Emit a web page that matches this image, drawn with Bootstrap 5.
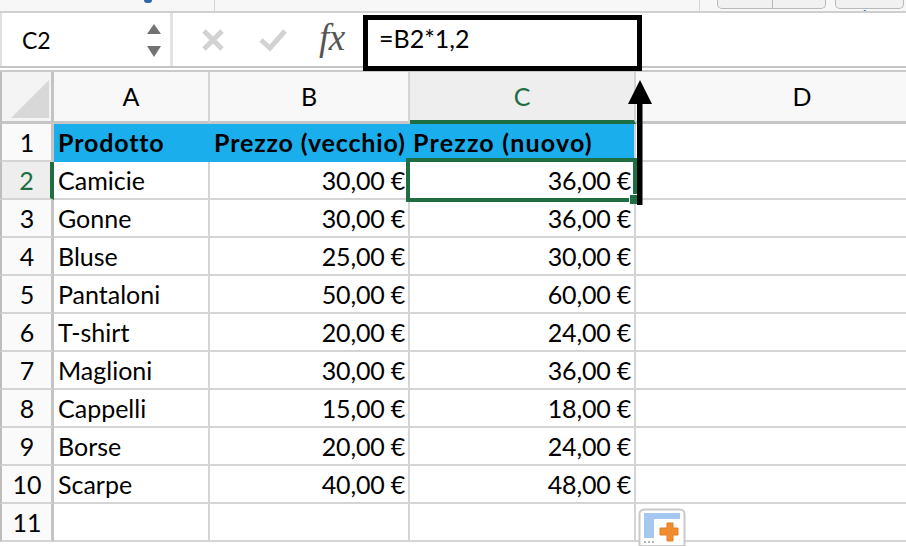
<!DOCTYPE html>
<html lang="it">
<head>
<meta charset="utf-8">
<title>Foglio</title>
<link href="https://cdn.jsdelivr.net/npm/bootstrap@5.3.0/dist/css/bootstrap.min.css" rel="stylesheet">
<style>
html,body{height:546px;overflow:hidden;background:#fff}
body{font-family:Lato,"Liberation Sans",sans-serif;color:#000;position:relative}
.ribbon-strip{height:13px;background:#f7f7f7;border-bottom:2px solid #cfcfcf;overflow:hidden}
.ribbon-sep{width:1px;height:11px;background:#d4d4d4}
.ribbon-dot{width:8px;height:3px;margin-left:144px;background:#2f66ad;border-radius:0 0 4px 4px}
.ribbon-sep-a{margin-left:62px}
.ribbon-sep-b{margin-left:484px}
.ribbon-btn{height:9px;border:1px solid #b9b9b9;border-top:0;border-radius:0 0 5px 5px;background:#f1f1f1}
.ribbon-btn-a{width:109px;margin-left:17px}
.ribbon-btn-a i{display:block;width:1px;height:8px;background:#b9b9b9;margin-left:54px}
.ribbon-btn-b{width:69px;margin-left:9px;padding-left:24px}
.formula-row{height:53px;padding-left:1px;background:#fff;border-left:2px solid #e0e0e0}
.name-box{width:167px;height:51px;padding:2px 8px 0 19px;font-size:23px;margin-top:1px}
.fx-tools{width:193px;height:53px;border-left:3px solid #e3e3e3;padding-left:28px}
.tool-x{width:57px}
.tool-ok{width:61px}
.fx-label{font-family:"Liberation Serif",serif;font-style:italic;font-size:37px;color:#555;line-height:1;margin-top:-5px;letter-spacing:-.5px}
.formula-text{padding-left:16px;font-size:25px;margin-top:-1px}
.double-rule{height:6px;border-top:2px solid #c4c4c4;border-bottom:2px solid #c9c9c9;background:#fff}
.sheet{table-layout:fixed;width:906px;border-collapse:separate;border-spacing:0;font-size:25px}
.sheet th,.sheet td{height:38px;padding:0;border-right:2px solid #d4d4d4;border-bottom:2px solid #d4d4d4;line-height:1;vertical-align:middle}
.sheet td{padding:0 3px 0 4px}
.sheet thead th{height:52px;font-weight:400;text-align:center;font-size:25px;background:#f8f8f8;border-bottom:3px solid #c6c6c6}
.sheet thead .col-last{padding-left:62px;border-right:0}
.sheet td.col-last{border-right:0}
.sheet tbody th{font-weight:400;text-align:center;background:#fafafa;border-right:3px solid #c4c4c4;border-left:2px solid #bdbdbd;padding-left:1px}
.sheet thead .corner{border-right:3px solid #c4c4c4;border-left:2px solid #bdbdbd;background:#f4f4f4;padding:0;vertical-align:bottom}
.corner svg{display:block}
.sheet .col-active{color:#1f6e43;background:#eeeeee;border-bottom:4px solid #1f6e43}
.sheet .row-active{color:#1f6e43;background:#eeeeee;border-right:4px solid #1f6e43}
.sheet .cell-head{background:#1aaeec;font-weight:700;border-right-color:#1aaeec;border-bottom-color:#1aaeec;letter-spacing:.85px;white-space:nowrap}
.sheet .cell-head-last{border-right-color:#d4d4d4;letter-spacing:1.2px;padding-left:3px}
.sheet .cell-num{text-align:right;letter-spacing:-.2px}
.focus-formula{position:absolute;left:363px;top:15px;width:279px;height:56px;border:5px solid #000;pointer-events:none}
.arrow-up{position:absolute;left:626px;top:80px;display:block}
.cell-select{position:absolute;left:406px;top:158px;width:231px;height:44px;border:4px solid #1f6e43}
.cell-handle{position:absolute;left:629px;top:194px;width:9px;height:10px;background:#1f6e43;border-left:1px solid #fff;border-top:1px solid #fff}
.paste-tag{position:absolute;left:638px;top:508px;display:block}
</style>
</head>
<body>
<div class="ribbon-strip d-flex align-items-start">
  <div class="ribbon-dot"></div>
  <div class="ribbon-sep ribbon-sep-a"></div>
  <div class="ribbon-sep ribbon-sep-b"></div>
  <div class="ribbon-btn ribbon-btn-a"><i></i></div>
  <div class="ribbon-btn ribbon-btn-b"><svg width="8" height="8" viewBox="0 0 8 8"><path d="M5 0 3 6" stroke="#2a7de1" stroke-width="2" fill="none"/></svg></div>
</div>
<div class="formula-row d-flex align-items-stretch">
  <div class="name-box d-flex justify-content-between align-items-center">
    <span>C2</span>
    <svg width="16" height="36" viewBox="0 0 16 36" aria-hidden="true"><path d="M8 1 15 11H1Z" fill="#737373"/><path d="M1 23H15L8 34Z" fill="#737373"/></svg>
  </div>
  <div class="fx-tools d-flex align-items-center">
    <div class="tool-x"><svg width="24" height="24" viewBox="0 0 24 24" aria-hidden="true"><path d="M3 3 21 21M21 3 3 21" stroke="#d2d2d2" stroke-width="5" fill="none"/></svg></div>
    <div class="tool-ok"><svg width="30" height="24" viewBox="0 0 30 24" aria-hidden="true"><path d="M3 12 12 20 27 3" stroke="#d2d2d2" stroke-width="5" fill="none"/></svg></div>
    <div class="fx-label">fx</div>
  </div>
  <div class="formula-text d-flex align-items-center">=B2*1,2</div>
</div>
<div class="double-rule"></div>
<table class="sheet">
  <colgroup><col style="width:54px"><col style="width:156px"><col style="width:200px"><col style="width:226px"><col style="width:270px"></colgroup>
  <thead>
    <tr><th class="corner"><svg width="49" height="49" viewBox="0 0 49 49" aria-hidden="true"><path d="M9 46 47 8V46Z" fill="#d8d8d8"/></svg></th><th>A</th><th>B</th><th class="col-active">C</th><th class="col-last">D</th></tr>
  </thead>
  <tbody>
    <tr><th>1</th><td class="cell-head">Prodotto</td><td class="cell-head">Prezzo (vecchio)</td><td class="cell-head cell-head-last">Prezzo (nuovo)</td><td class="col-last"></td></tr>
    <tr><th class="row-active">2</th><td>Camicie</td><td class="cell-num">30,00 €</td><td class="cell-num">36,00 €</td><td class="col-last"></td></tr>
    <tr><th>3</th><td>Gonne</td><td class="cell-num">30,00 €</td><td class="cell-num">36,00 €</td><td class="col-last"></td></tr>
    <tr><th>4</th><td>Bluse</td><td class="cell-num">25,00 €</td><td class="cell-num">30,00 €</td><td class="col-last"></td></tr>
    <tr><th>5</th><td>Pantaloni</td><td class="cell-num">50,00 €</td><td class="cell-num">60,00 €</td><td class="col-last"></td></tr>
    <tr><th>6</th><td>T-shirt</td><td class="cell-num">20,00 €</td><td class="cell-num">24,00 €</td><td class="col-last"></td></tr>
    <tr><th>7</th><td>Maglioni</td><td class="cell-num">30,00 €</td><td class="cell-num">36,00 €</td><td class="col-last"></td></tr>
    <tr><th>8</th><td>Cappelli</td><td class="cell-num">15,00 €</td><td class="cell-num">18,00 €</td><td class="col-last"></td></tr>
    <tr><th>9</th><td>Borse</td><td class="cell-num">20,00 €</td><td class="cell-num">24,00 €</td><td class="col-last"></td></tr>
    <tr><th>10</th><td>Scarpe</td><td class="cell-num">40,00 €</td><td class="cell-num">48,00 €</td><td class="col-last"></td></tr>
    <tr><th>11</th><td></td><td></td><td></td><td class="col-last"></td></tr>
  </tbody>
</table>
<div class="cell-select"></div>
<div class="cell-handle"></div>
<div class="focus-formula"></div>
<svg class="arrow-up" width="28" height="126" viewBox="0 0 28 126" aria-hidden="true"><path d="M14 0 26 24H16.500V125H11V24H2Z" fill="#000"/></svg>
<svg class="paste-tag" width="48" height="38" viewBox="0 0 48 38" aria-hidden="true">
  <path d="M1.500 38V6A4.500 4.500 0 0 1 6 1.500H42A4.500 4.500 0 0 1 46.500 6V38Z" fill="#fff" stroke="#c9c9c9" stroke-width="2"/>
  <path d="M6 5H42V11H16V30H6Z" fill="#a5c8f0"/>
  <path d="M22 20H29V15H35V20H40V27H35V33H29V27H22Z" fill="#f28c2e" stroke="#e57f20"/>
  <path d="M6 33H8V35H6ZM10 33H12V35H10ZM14 33H16V35H14Z" fill="#b5b5b5"/>
</svg>
</body>
</html>
